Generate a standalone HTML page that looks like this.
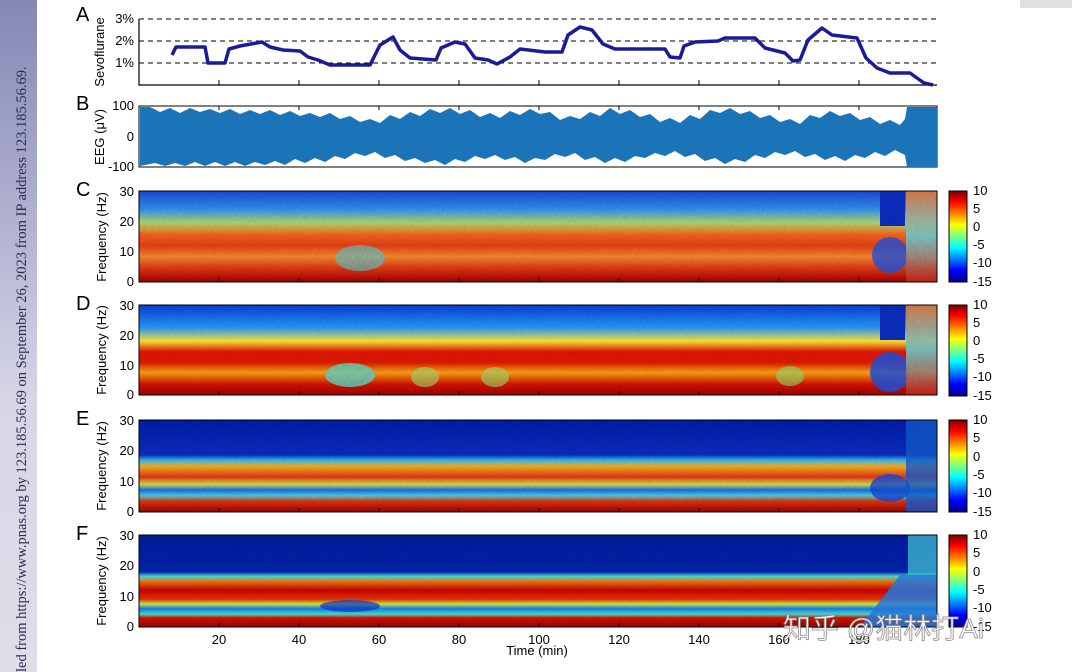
<!DOCTYPE html>
<html><head><meta charset="utf-8"><style>
body{margin:0;width:1072px;height:672px;overflow:hidden;background:#fff;font-family:"Liberation Sans",sans-serif}
svg{display:block}
</style></head><body>
<svg width="1072" height="672" viewBox="0 0 1072 672" xmlns="http://www.w3.org/2000/svg" font-family="Liberation Sans, sans-serif">
<defs>
<filter id="noise" x="0" y="0" width="100%" height="100%">
<feTurbulence type="fractalNoise" baseFrequency="0.8 0.25" numOctaves="2" seed="3"/>
<feColorMatrix type="saturate" values="0"/>
</filter>
<linearGradient id="strip" x1="0" y1="0" x2="0" y2="1">
<stop offset="0" stop-color="#8587b6"/><stop offset="0.35" stop-color="#b4b5d2"/><stop offset="0.6" stop-color="#d6d6e6"/><stop offset="1" stop-color="#dedee9"/></linearGradient>
<linearGradient id="jet" x1="0" y1="0" x2="0" y2="1">
<stop offset="0" stop-color="#800000"/><stop offset="0.12" stop-color="#ff0000"/><stop offset="0.37" stop-color="#ffff00"/><stop offset="0.62" stop-color="#00ffff"/><stop offset="0.87" stop-color="#0000ff"/><stop offset="1" stop-color="#00008f"/></linearGradient>
<linearGradient id="gC" x1="0" y1="0" x2="0" y2="1">
<stop offset="0" stop-color="#1840c8"/><stop offset="0.2" stop-color="#2a80e0"/><stop offset="0.35" stop-color="#a0c860"/><stop offset="0.48" stop-color="#e85818"/><stop offset="0.6" stop-color="#d83810"/><stop offset="0.72" stop-color="#e87828"/><stop offset="0.85" stop-color="#d03010"/><stop offset="1" stop-color="#900000"/></linearGradient>
<linearGradient id="gD" x1="0" y1="0" x2="0" y2="1">
<stop offset="0" stop-color="#0838c8"/><stop offset="0.25" stop-color="#2088f0"/><stop offset="0.4" stop-color="#f0d830"/><stop offset="0.52" stop-color="#d81000"/><stop offset="0.64" stop-color="#d01800"/><stop offset="0.75" stop-color="#f09010"/><stop offset="0.88" stop-color="#c81000"/><stop offset="1" stop-color="#900000"/></linearGradient>
<linearGradient id="gE" x1="0" y1="0" x2="0" y2="1">
<stop offset="0" stop-color="#00189a"/><stop offset="0.38" stop-color="#0828b0"/><stop offset="0.44" stop-color="#30b0e0"/><stop offset="0.5" stop-color="#e8a020"/><stop offset="0.62" stop-color="#d83010"/><stop offset="0.7" stop-color="#c0d040"/><stop offset="0.76" stop-color="#1060e0"/><stop offset="0.82" stop-color="#40c0d0"/><stop offset="0.88" stop-color="#d03010"/><stop offset="1" stop-color="#900000"/></linearGradient>
<linearGradient id="gF" x1="0" y1="0" x2="0" y2="1">
<stop offset="0" stop-color="#001890"/><stop offset="0.4" stop-color="#0020a0"/><stop offset="0.45" stop-color="#40d0d0"/><stop offset="0.5" stop-color="#e07010"/><stop offset="0.6" stop-color="#c00000"/><stop offset="0.7" stop-color="#d83000"/><stop offset="0.75" stop-color="#c0e040"/><stop offset="0.8" stop-color="#1070e0"/><stop offset="0.86" stop-color="#40d0c0"/><stop offset="0.9" stop-color="#c81000"/><stop offset="1" stop-color="#900000"/></linearGradient>
<linearGradient id="endg" x1="0" y1="0" x2="0" y2="1">
<stop offset="0" stop-color="#e07030"/><stop offset="0.5" stop-color="#60c0c0"/><stop offset="1" stop-color="#c02010"/></linearGradient>
</defs>
<rect x="0" y="0" width="37" height="672" fill="url(#strip)"/>
<text transform="translate(26,672) rotate(-90)" x="0" y="0" font-family="Liberation Serif, serif" font-size="14.5" fill="#2a2a50">led from https://www.pnas.org by 123.185.56.69 on September 26, 2023 from IP address 123.185.56.69.</text>
<rect x="1020" y="0" width="52" height="8" fill="#e0e0e0"/>

<g font-size="20" fill="#000">
<text x="76" y="21">A</text><text x="76" y="110">B</text><text x="76" y="196">C</text><text x="76" y="310">D</text><text x="76" y="425">E</text><text x="76" y="540">F</text></g>

<!-- A -->
<g stroke="#000" stroke-width="1" stroke-dasharray="5,4"><line x1="139" y1="19" x2="937" y2="19"/><line x1="139" y1="41" x2="937" y2="41"/><line x1="139" y1="63" x2="937" y2="63"/></g>
<path d="M139 19V85H937" fill="none" stroke="#000" stroke-width="1.2"/>
<g stroke="#000"><line x1="219" y1="85" x2="219" y2="80"/><line x1="299" y1="85" x2="299" y2="80"/><line x1="379" y1="85" x2="379" y2="80"/><line x1="459" y1="85" x2="459" y2="80"/><line x1="539" y1="85" x2="539" y2="80"/><line x1="619" y1="85" x2="619" y2="80"/><line x1="699" y1="85" x2="699" y2="80"/><line x1="779" y1="85" x2="779" y2="80"/><line x1="859" y1="85" x2="859" y2="80"/></g>
<g font-size="13" text-anchor="end"><text x="134" y="23">3%</text><text x="134" y="45">2%</text><text x="134" y="67">1%</text></g>
<text transform="translate(104,52) rotate(-90)" font-size="13" text-anchor="middle">Sevoflurane</text>
<polyline fill="none" stroke="#1a1a9a" stroke-width="3.5" stroke-linejoin="round" points="172,55 176,47 205,47 208,63 225,63 229,49 240,46 262,42 270,47 283,50 300,51 308,57 318,60 330,65 370,65 380,45 393,37 400,50 410,58 436,60 441,48 455,42 465,44 475,58 488,60 497,64 510,57 520,49 545,52 562,52 568,35 580,27 592,30 603,44 615,49 665,49 670,57 680,58 684,46 695,42 718,41 725,38 755,38 765,48 785,53 793,61 800,60 808,40 822,28 832,35 857,38 866,58 877,68 890,73 910,73 924,83 933,85"/>

<!-- B -->
<rect x="139" y="106" width="798" height="61" fill="none" stroke="#000"/>
<path fill="#1c74b8" d="M140 107 L150 107 L160 112 L170 108 L180 113 L190 108 L200 112 L210 109 L220 113 L230 109 L240 114 L250 110 L260 114 L270 110 L280 115 L290 111 L300 116 L310 113 L320 117 L330 113 L340 119 L350 116 L360 122 L370 119 L380 123 L390 115 L400 119 L410 112 L420 116 L430 109 L440 113 L450 108 L460 114 L470 110 L480 117 L490 113 L500 118 L510 111 L520 115 L530 109 L540 114 L550 112 L560 120 L570 116 L580 119 L590 112 L600 116 L610 108 L620 114 L630 110 L640 117 L650 114 L660 122 L670 118 L680 123 L690 115 L700 119 L710 110 L720 113 L730 108 L740 114 L750 111 L760 118 L770 115 L780 122 L790 119 L800 124 L810 115 L820 118 L830 111 L840 116 L850 113 L860 120 L870 117 L880 124 L890 120 L900 125 L905 119 L907 107 L937 107 L937 167 L907 167 L905 155 L895 150 L885 156 L875 152 L865 158 L855 155 L845 161 L835 156 L825 160 L815 154 L805 157 L795 151 L785 155 L775 152 L765 158 L755 155 L745 162 L735 159 L725 164 L715 158 L705 161 L695 154 L685 157 L675 151 L665 156 L655 153 L645 158 L635 156 L625 162 L615 158 L605 163 L595 157 L585 160 L575 153 L565 157 L555 154 L545 160 L535 158 L525 163 L515 157 L505 160 L495 155 L485 159 L475 156 L465 162 L455 159 L445 165 L435 160 L425 163 L415 158 L405 161 L395 155 L385 158 L375 152 L365 156 L355 153 L345 159 L335 156 L325 162 L315 158 L305 163 L295 159 L285 165 L275 161 L265 165 L255 162 L245 166 L235 162 L225 166 L215 162 L205 166 L195 162 L185 166 L175 163 L165 166 L155 163 L140 166 Z"/>
<g stroke="#000"><line x1="219" y1="106" x2="219" y2="110"/><line x1="299" y1="106" x2="299" y2="110"/><line x1="379" y1="106" x2="379" y2="110"/><line x1="459" y1="106" x2="459" y2="110"/><line x1="539" y1="106" x2="539" y2="110"/><line x1="619" y1="106" x2="619" y2="110"/><line x1="699" y1="106" x2="699" y2="110"/><line x1="779" y1="106" x2="779" y2="110"/><line x1="859" y1="106" x2="859" y2="110"/></g>
<g font-size="13" text-anchor="end"><text x="134" y="110">100</text><text x="134" y="141">0</text><text x="134" y="171">-100</text></g>
<text transform="translate(104,137) rotate(-90)" font-size="13" text-anchor="middle">EEG (μV)</text>

<!-- spectrogram panels -->
<g id="panels">
<rect x="139" y="191" width="798" height="91" fill="url(#gC)"/>
<ellipse cx="360" cy="258" rx="25" ry="13" fill="#40b8c0" opacity="0.6"/>
<ellipse cx="890" cy="255" rx="18" ry="18" fill="#1848d0" opacity="0.8"/>
<rect x="880" y="191" width="25" height="35" fill="#0828b0"/>
<rect x="906" y="191" width="31" height="91" fill="url(#endg)" opacity="0.9"/>
<rect x="139" y="191" width="798" height="91" filter="url(#noise)" opacity="0.35" style="mix-blend-mode:overlay"/>
<rect x="139" y="191" width="798" height="91" fill="none" stroke="#000"/>

<rect x="139" y="305" width="798" height="90" fill="url(#gD)"/>
<ellipse cx="350" cy="375" rx="25" ry="12" fill="#50c8b0" opacity="0.8"/>
<ellipse cx="425" cy="377" rx="14" ry="10" fill="#90d060" opacity="0.6"/>
<ellipse cx="495" cy="377" rx="14" ry="10" fill="#90d060" opacity="0.6"/>
<ellipse cx="790" cy="376" rx="14" ry="10" fill="#80d060" opacity="0.6"/>
<ellipse cx="890" cy="372" rx="20" ry="20" fill="#1848d0" opacity="0.85"/>
<rect x="880" y="305" width="25" height="35" fill="#0828b0"/>
<rect x="906" y="305" width="31" height="90" fill="url(#endg)" opacity="0.9"/>
<rect x="139" y="305" width="798" height="90" filter="url(#noise)" opacity="0.3" style="mix-blend-mode:overlay"/>
<rect x="139" y="305" width="798" height="90" fill="none" stroke="#000"/>

<rect x="139" y="420" width="798" height="92" fill="url(#gE)"/>
<ellipse cx="890" cy="488" rx="20" ry="14" fill="#1040c8" opacity="0.8"/>
<rect x="906" y="420" width="31" height="92" fill="#1050c0" opacity="0.8"/>
<rect x="139" y="420" width="798" height="92" filter="url(#noise)" opacity="0.3" style="mix-blend-mode:overlay"/>
<rect x="139" y="420" width="798" height="92" fill="none" stroke="#000"/>

<rect x="139" y="535" width="798" height="92" fill="url(#gF)"/>
<ellipse cx="350" cy="606" rx="30" ry="6" fill="#0830c0" opacity="0.7"/>
<path d="M860 627 L900 575 L937 575 L937 627 Z" fill="#2070d8" opacity="0.85"/>
<rect x="908" y="535" width="29" height="40" fill="#40c0d0" opacity="0.7"/>
<rect x="139" y="535" width="798" height="92" filter="url(#noise)" opacity="0.25" style="mix-blend-mode:overlay"/>
<rect x="139" y="535" width="798" height="92" fill="none" stroke="#000"/>
</g>
<g stroke="#000">
<path d="M219 282v-4M299 282v-4M379 282v-4M459 282v-4M539 282v-4M619 282v-4M699 282v-4M779 282v-4M859 282v-4"/>
<path d="M219 395v-4M299 395v-4M379 395v-4M459 395v-4M539 395v-4M619 395v-4M699 395v-4M779 395v-4M859 395v-4"/>
<path d="M219 512v-4M299 512v-4M379 512v-4M459 512v-4M539 512v-4M619 512v-4M699 512v-4M779 512v-4M859 512v-4"/>
<path d="M219 627v-4M299 627v-4M379 627v-4M459 627v-4M539 627v-4M619 627v-4M699 627v-4M779 627v-4M859 627v-4"/>
</g>

<g font-size="13" text-anchor="end">
<text x="134" y="196">30</text><text x="134" y="226">20</text><text x="134" y="256">10</text><text x="134" y="286">0</text>
<text x="134" y="310">30</text><text x="134" y="340">20</text><text x="134" y="370">10</text><text x="134" y="399">0</text>
<text x="134" y="425">30</text><text x="134" y="455">20</text><text x="134" y="486">10</text><text x="134" y="516">0</text>
<text x="134" y="540">30</text><text x="134" y="570">20</text><text x="134" y="601">10</text><text x="134" y="631">0</text>
</g>
<g font-size="13" text-anchor="middle">
<text transform="translate(106,237) rotate(-90)">Frequency (Hz)</text>
<text transform="translate(106,350) rotate(-90)">Frequency (Hz)</text>
<text transform="translate(106,466) rotate(-90)">Frequency (Hz)</text>
<text transform="translate(106,581) rotate(-90)">Frequency (Hz)</text>
</g>

<!-- colorbars -->
<g stroke="#000" stroke-width="1">
<rect x="949" y="191" width="18" height="91" fill="url(#jet)"/>
<rect x="949" y="305" width="18" height="91" fill="url(#jet)"/>
<rect x="949" y="420" width="18" height="92" fill="url(#jet)"/>
<rect x="949" y="535" width="18" height="92" fill="url(#jet)"/>
</g>
<g font-size="13">
<text x="973" y="195">10</text><text x="973" y="213">5</text><text x="973" y="231">0</text><text x="973" y="249">-5</text><text x="973" y="267">-10</text><text x="973" y="286">-15</text>
<text x="973" y="309">10</text><text x="973" y="327">5</text><text x="973" y="345">0</text><text x="973" y="363">-5</text><text x="973" y="381">-10</text><text x="973" y="400">-15</text>
<text x="973" y="424">10</text><text x="973" y="442">5</text><text x="973" y="461">0</text><text x="973" y="479">-5</text><text x="973" y="497">-10</text><text x="973" y="516">-15</text>
<text x="973" y="539">10</text><text x="973" y="557">5</text><text x="973" y="576">0</text><text x="973" y="594">-5</text><text x="973" y="612">-10</text><text x="973" y="631">-15</text>
</g>

<g font-size="13" text-anchor="middle">
<text x="219" y="644">20</text><text x="299" y="644">40</text><text x="379" y="644">60</text><text x="459" y="644">80</text><text x="539" y="644">100</text><text x="619" y="644">120</text><text x="699" y="644">140</text><text x="779" y="644">160</text><text x="859" y="644">180</text>
<text x="537" y="655">Time (min)</text>
</g>

<text x="783" y="638" font-family="Liberation Sans, Noto Sans CJK SC, sans-serif" font-size="28" fill="#fff" stroke="#888" stroke-width="0.8" opacity="0.95">知乎 @猫林打Ai</text>
</svg>
</body></html>
